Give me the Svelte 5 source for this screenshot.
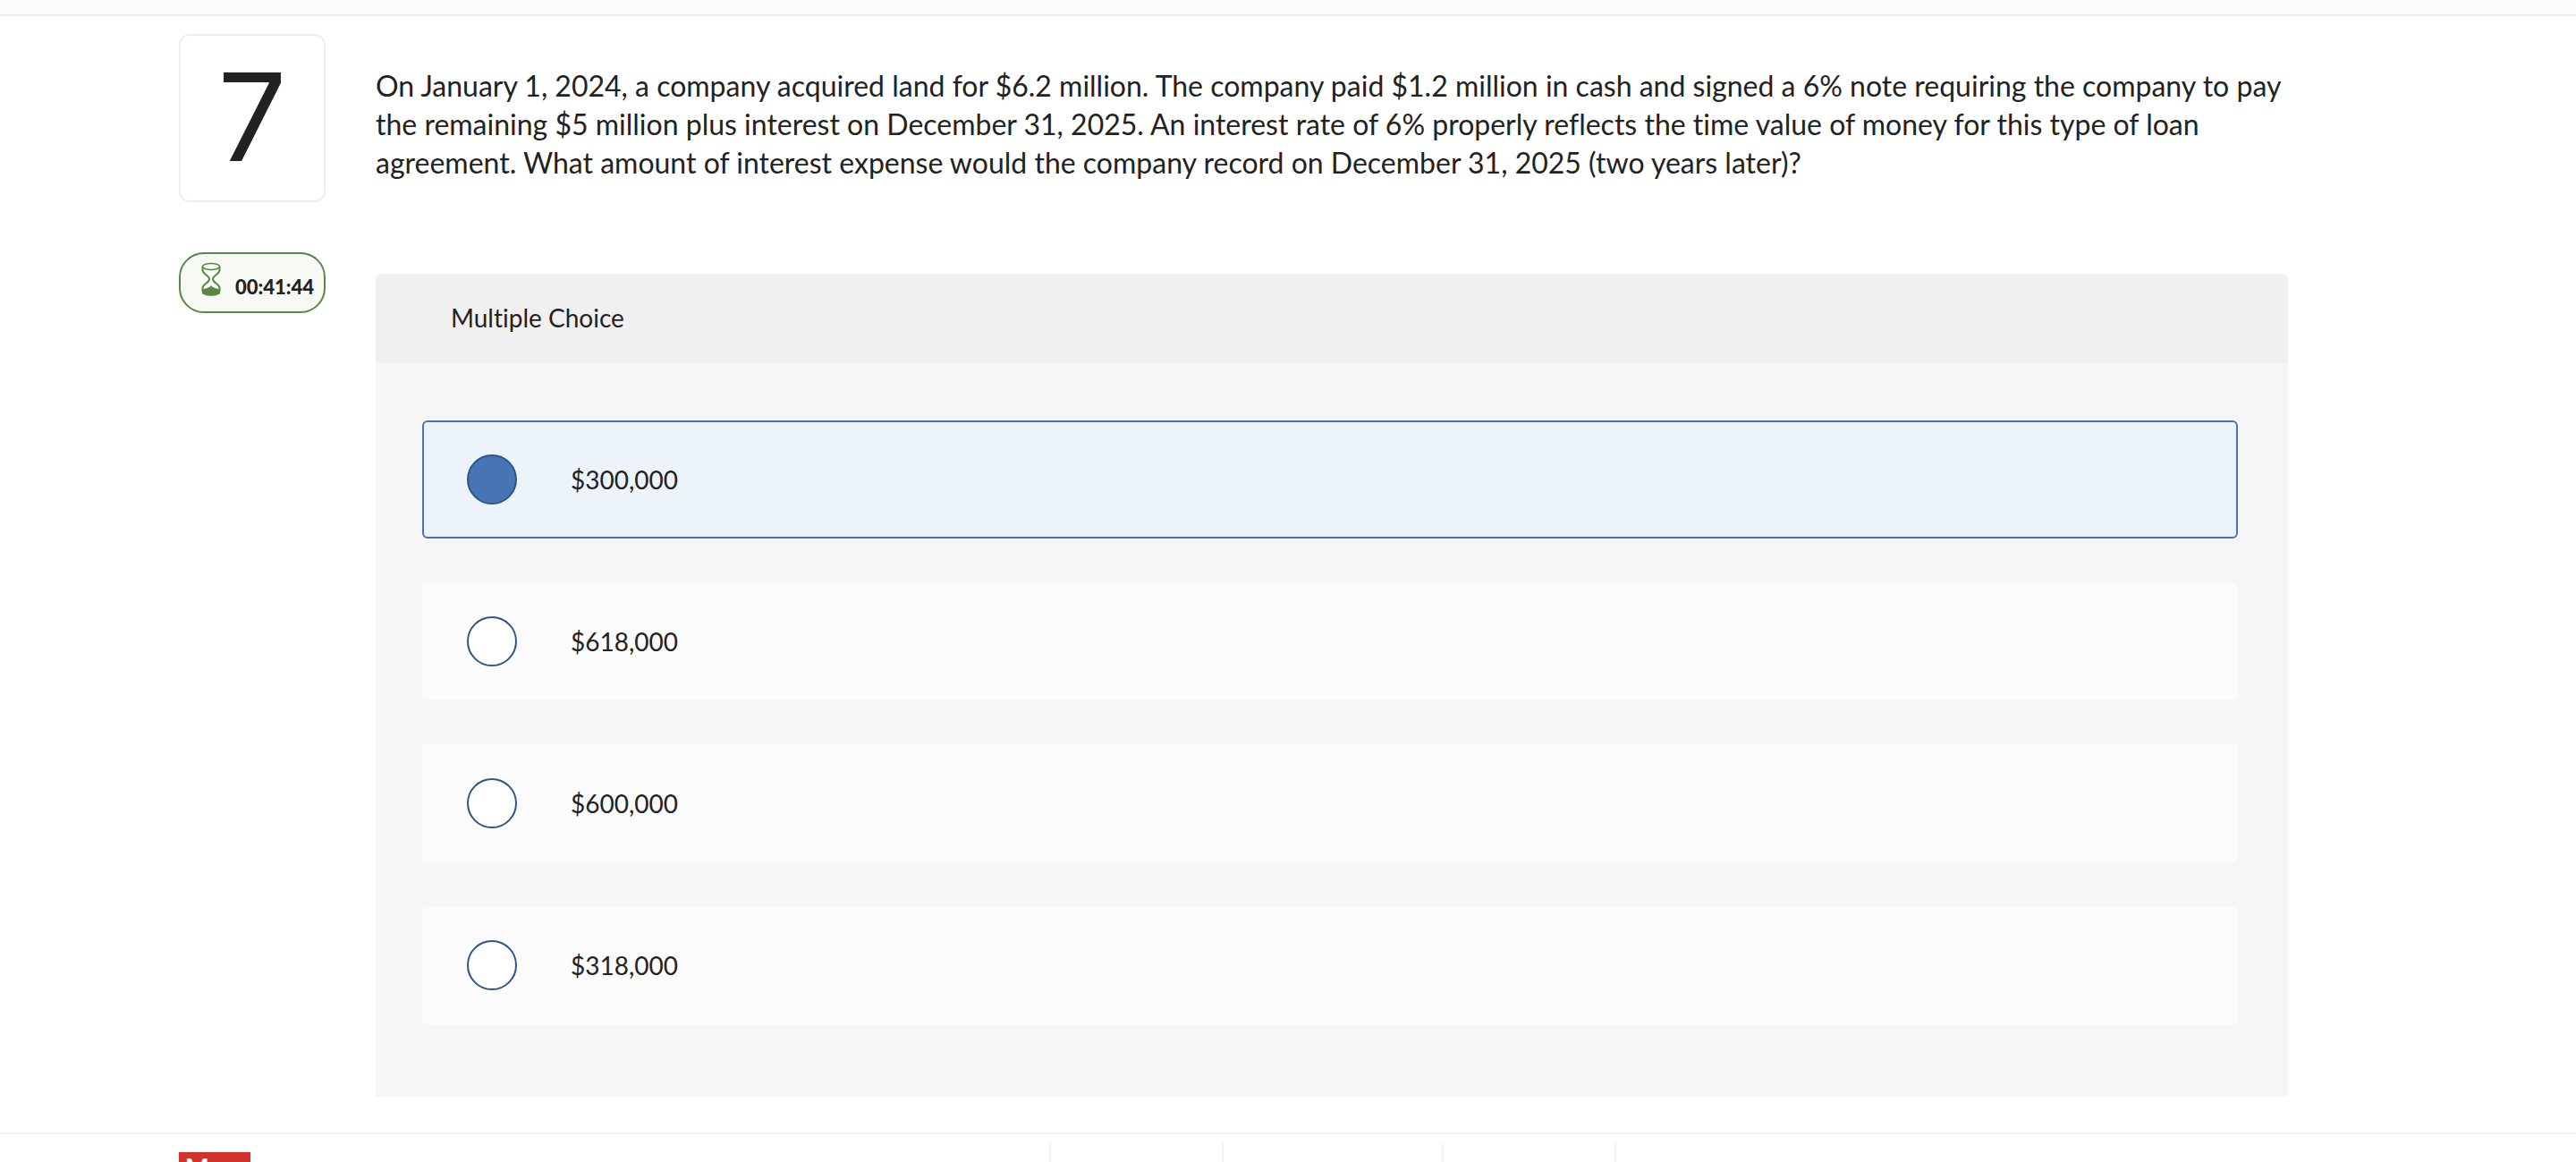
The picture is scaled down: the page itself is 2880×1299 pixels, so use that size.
<script>
	let number = 7
	let timer = "00:41:44"
	let selected = "$300,000"

	const choices = ["$300,000", "$618,000", "$600,000", "$318,000"]
</script>

<div class="page">
	<header class="top-bar"></header>

	<main class="question">
		<aside class="side">
			<div class="number">{number}</div>
			<div class="timer">
				<svg class="hourglass" viewBox="0 0 22 38" aria-hidden="true">
					<g fill="none" stroke="#5a8646" stroke-width="2">
						<ellipse cx="11" cy="5" rx="9.5" ry="3.5" stroke-width="1.6" />
						<path d="M1.5 5v4c0 5 7.500 5.500 7.500 10s-7.500 5-7.500 10v4M20.500 5v4c0 5-7.500 5.500-7.500 10s7.500 5 7.500 10v4" />
					</g>
					<path d="M1 31c4-2 7.500-1.500 10-5 2.500 3.500 6 3 10 5v3c0 5-20 5-20 0z" fill="#5a8646" />
				</svg>
				<span class="time">{timer}</span>
			</div>
		</aside>

		<div class="content">
			<p class="prompt">
				On January 1, 2024, a company acquired land for $6.2 million. The company paid $1.2 million in cash and signed a 6% note requiring the company to pay the remaining $5 million plus interest on December 31, 2025. An interest rate of 6% properly reflects the time value of money for this type of loan agreement. What amount of interest expense would the company record on December 31, 2025 (two years later)?
			</p>

			<section class="panel">
				<h2>Multiple Choice</h2>
				<div class="choices">
					{#each choices as choice}
						<label class="choice" class:selected={selected === choice}>
							<input type="radio" name="answer" value={choice} bind:group={selected} />
							<span>{choice}</span>
						</label>
					{/each}
				</div>
			</section>
		</div>
	</main>

	<footer>
		<div class="logo">Mc</div>
		<nav>
			<div class="step"></div>
			<div class="step wide"></div>
			<div class="step"></div>
		</nav>
	</footer>
</div>

<style>
	:global(body) {
		background: #fff;
		overflow: hidden;
	}
	.page {
		display: flex;
		flex-direction: column;
		height: 100vh;
		overflow: hidden;
		color: #222;
		font-family: Lato, "Liberation Sans", sans-serif;
		font-variant-ligatures: none;
	}
	.top-bar {
		flex: none;
		height: 16px;
		background: #fcfcfc;
		border-bottom: 2px solid #eee;
	}
	.question {
		display: flex;
		flex: none;
		gap: 56px;
		padding: 20px 322px 40px 200px;
	}
	.side {
		flex: none;
		width: 164px;
	}
	.number {
		display: flex;
		align-items: center;
		justify-content: center;
		box-sizing: border-box;
		height: 188px;
		padding-bottom: 4px;
		border: 2px solid #eee;
		border-radius: 12px;
		font-family: Inter, sans-serif;
		font-size: 136px;
	}
	.timer {
		display: flex;
		align-items: center;
		box-sizing: border-box;
		height: 68px;
		margin-top: 56px;
		padding-left: 23px;
		border: 2px solid #5a8646;
		border-radius: 28px;
		background: #f7f9f5;
	}
	.hourglass {
		width: 22px;
		height: 38px;
		margin-bottom: 8px;
	}
	.time {
		margin: 8px 0 0 16px;
		font-size: 22px;
		font-weight: 900;
	}
	.content {
		flex: 1;
		min-width: 0;
	}
	.prompt {
		margin: 0;
		padding: 36px 0 103px;
		font-size: 32px;
		line-height: 43px;
	}
	.panel {
		border-radius: 6px 6px 0 0;
		background: #f6f6f6;
		overflow: hidden;
	}
	h2 {
		margin: 0;
		padding: 0 84px 2px;
		background: #f0f0f0;
		font-size: 28px;
		font-weight: 400;
		line-height: 98px;
	}
	.choices {
		display: flex;
		flex-direction: column;
		gap: 49px;
		padding: 64px 56px 81px 52px;
	}
	.choice {
		display: flex;
		align-items: center;
		gap: 60px;
		box-sizing: border-box;
		height: 132px;
		padding-left: 48px;
		border: 2px solid #fbfbfb;
		border-radius: 6px;
		background: #fbfbfb;
		font-size: 28px;
		cursor: pointer;
	}
	.choice.selected {
		border-color: #4774b4;
		background: #ecf3fb;
	}
	input {
		appearance: none;
		box-sizing: border-box;
		width: 56px;
		height: 56px;
		margin: 0;
		border: 2px solid #2c5689;
		border-radius: 50%;
		background: #fff;
	}
	input:checked {
		background: #4774b4;
	}
	footer {
		display: flex;
		flex: none;
		border-top: 2px solid #f2f2f2;
		padding-left: 200px;
	}
	.logo {
		width: 80px;
		height: 80px;
		margin-top: 20px;
		box-sizing: border-box;
		padding: 0 7px;
		background: #d0342c;
		color: #fff;
		font-size: 28px;
		font-weight: 900;
	}
	nav {
		display: flex;
		margin: 10px 0 0 893px;
	}
	.step {
		box-sizing: border-box;
		width: 193px;
		height: 80px;
		border-left: 2px solid #f2f2f2;
	}
	.step.wide {
		width: 246px;
	}
	.step:last-child {
		width: 195px;
		border-right: 2px solid #f2f2f2;
	}
</style>
